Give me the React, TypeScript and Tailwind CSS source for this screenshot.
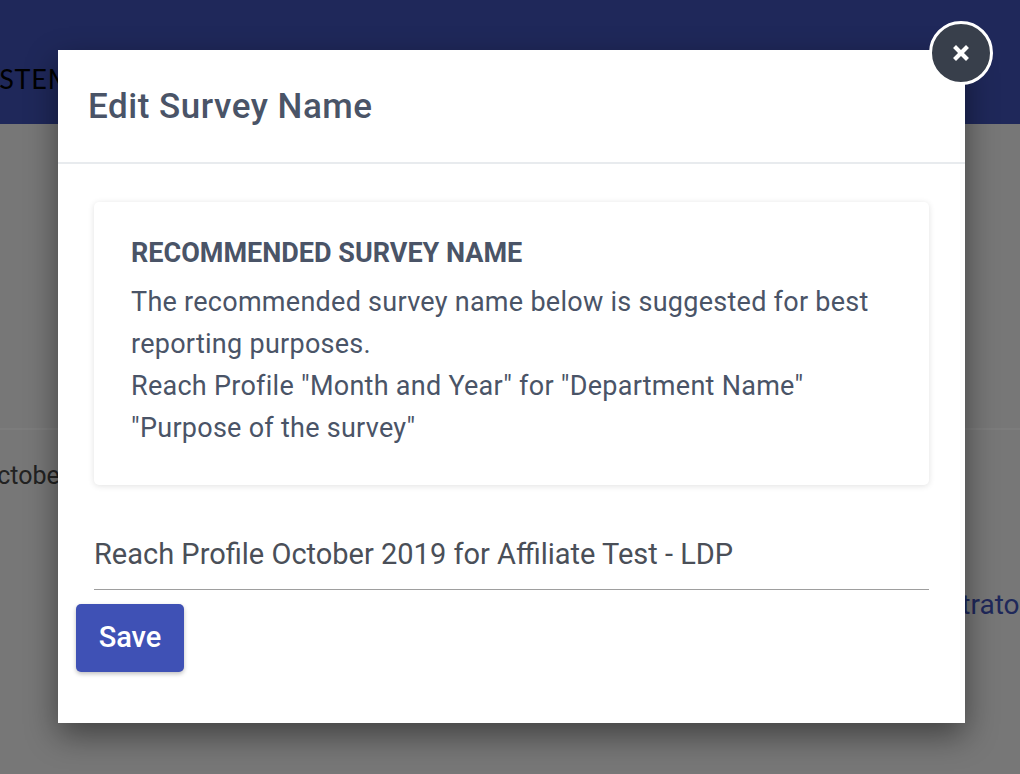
import { X } from "lucide-react";

const font = { fontFamily: "Roboto, 'Noto Sans', sans-serif" };

function BackgroundPage() {
  // the page behind the dialog, dimmed by the overlay
  return (
    <div className="flex h-[774px] w-[1020px] flex-col bg-[#eeeeee]">
      <header className="flex h-[124px] items-center bg-[#3f51b5]">
        <span
          className="-ml-[33px] mt-[34px] whitespace-nowrap text-[27px] tracking-[0.03em] text-black"
          style={{ fontFamily: "Lato, sans-serif" }}
        >
          SYSTEM
        </span>
      </header>
      <div className="mt-[304px] border-t-2 border-[#f8f8f8]" />
      <div className="flex h-[92px] items-center">
        <span className="-ml-[20px] text-[25px] text-[#444]" style={font}>
          October
        </span>
      </div>
      <div className="mt-[62px] flex justify-end">
        <span className="-mr-[9px] whitespace-nowrap text-[28px] text-[#3f51b5]" style={font}>
          Administrator
        </span>
      </div>
    </div>
  );
}

function CloseButton() {
  return (
    <button className="absolute -right-[28px] -top-[29px] flex h-[64px] w-[64px] items-center justify-center rounded-full border-[3px] border-white bg-[#383f4b]">
      <X className="h-[20px] w-[20px] text-white" strokeWidth={5} strokeLinecap="square" />
    </button>
  );
}

export default function App() {
  return (
    <div className="relative h-[774px] w-[1020px] overflow-hidden" style={font}>
      <BackgroundPage />
      <div className="absolute inset-0 bg-black/50" />

      <div className="absolute left-[58px] top-[50px] flex h-[673px] w-[907px] flex-col bg-white shadow-[0_12px_30px_rgba(0,0,0,0.45)]">
        <CloseButton />

        <div className="flex h-[114px] items-center border-b-2 border-[#e8ebee] pl-[30px]">
          <h2 className="text-[35px] font-medium leading-none tracking-[0.015em] text-[#4a5467]">
            Edit Survey Name
          </h2>
        </div>

        <div className="flex flex-col px-[36px] pt-[38px]">
          <div className="rounded-[5px] bg-white px-[37px] pb-[36px] pt-[30px] shadow-[0_1px_6px_rgba(0,0,0,0.12)]">
            <h3 className="text-[27px] font-bold leading-[42px] text-[#4a5467]">
              RECOMMENDED SURVEY NAME
            </h3>
            <p className="mt-[7px] text-[27px] leading-[42px] tracking-[0.01em] text-[#4a5467]">
              The recommended survey name below is suggested for best reporting purposes.
              <br />
              Reach Profile "Month and Year" for "Department Name" "Purpose of the survey"
            </p>
          </div>

          <div className="mt-[35px] flex h-[70px] items-center border-b border-[#9e9e9e] pt-[1px]">
            <span className="text-[29px] text-[#4a4f58]">
              Reach Profile October 2019 for Affiliate Test - LDP
            </span>
          </div>
        </div>

        <div className="mt-[14px] pl-[18px]">
          <button className="flex h-[68px] w-[108px] items-center justify-center rounded-[5px] bg-[#3f51b5] text-[29px] font-medium text-white shadow-[0_2px_4px_rgba(0,0,0,0.25)]">
            Save
          </button>
        </div>
      </div>
    </div>
  );
}
